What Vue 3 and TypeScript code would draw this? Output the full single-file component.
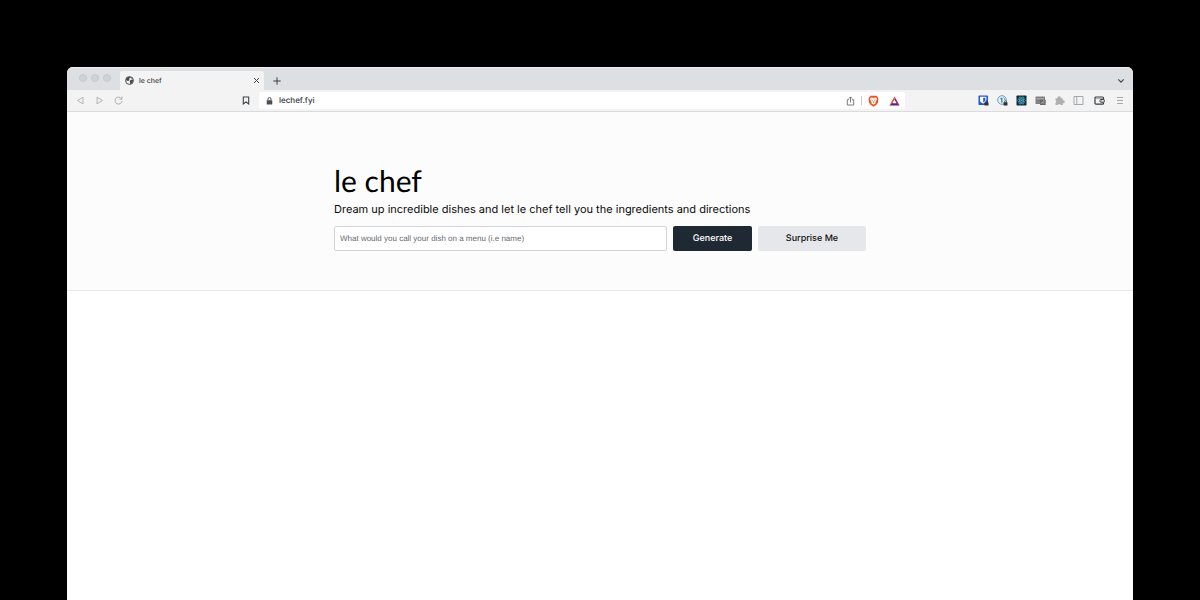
<script setup lang="ts">
import { ref } from 'vue'

const dish = ref('')
const url = ref('lechef.fyi')
</script>

<template>
  <div class="desktop">
    <div class="window">
      <header class="tabs">
        <div class="lights"><span></span><span></span><span></span></div>
        <div class="tab">
          <svg class="globe" viewBox="0 0 16 16" aria-hidden="true">
            <circle cx="8" cy="8" r="7" fill="#f3f4f5" stroke="#42474b" stroke-width="1.7" />
            <path d="M2 5 5 2l5-.5-.5 2L7 5l1 2-2 2-4-1zM9 8l3-2 2.500 1-1 4-4 3.500-1-2 1-2-1.500-1zM11 2l3 3-2 .5z" fill="#42474b" />
          </svg>
          <span class="title">le chef</span>
          <button class="icon" aria-label="Close tab">
            <svg width="7" height="7" viewBox="0 0 7 7"><path d="m1 1 5 5M6 1 1 6" stroke="#44484c" fill="none" /></svg>
          </button>
        </div>
        <button class="icon plus" aria-label="New tab">
          <svg width="8" height="8" viewBox="0 0 8 8"><path d="M4 .3v7.400M.3 4h7.400" stroke="#3c4043" fill="none" /></svg>
        </button>
        <button class="icon chevron" aria-label="Search tabs">
          <svg width="8" height="6" viewBox="0 0 8 6"><path d="m1.300 1.400 2.700 2.700 2.700-2.700" stroke="#3f454a" stroke-width="1.100" fill="none" /></svg>
        </button>
      </header>

      <nav class="toolbar" aria-label="Browser toolbar">
        <div class="left">
          <div class="history">
            <button class="icon" aria-label="Back">
              <svg width="9" height="9" viewBox="0 0 9 9"><path d="M7 1.200v6.600L1.500 4.500z" stroke="#b0b2b4" stroke-linejoin="round" fill="none" /></svg>
            </button>
            <button class="icon" aria-label="Forward">
              <svg width="9" height="9" viewBox="0 0 9 9"><path d="M2 1.200v6.600l5.500-3.300z" stroke="#b0b2b4" stroke-linejoin="round" fill="none" /></svg>
            </button>
            <button class="icon" aria-label="Reload">
              <svg width="9" height="9" viewBox="0 0 9 9"><path d="M7.500 2.700A3.500 3.500 0 1 0 8 5M8 .5v2.700H5.400" stroke="#acaeb0" fill="none" /></svg>
            </button>
          </div>
          <button class="icon" aria-label="Bookmark">
            <svg width="8" height="9" viewBox="0 0 8 9"><path d="M1.300 1h5.400v7L4 5.900 1.300 8z" stroke="#3d4145" stroke-width="1.100" fill="none" /></svg>
          </button>
        </div>

        <div class="address">
          <svg width="7" height="8" viewBox="0 0 7 8" aria-hidden="true">
            <rect x=".7" y="3.200" width="5.600" height="4.300" rx=".6" fill="#4b4f53" />
            <path d="M2 3.400V2a1.500 1.500 0 0 1 3 0v1.400" stroke="#4b4f53" fill="none" />
          </svg>
          <input v-model="url" type="text" aria-label="Address">
          <button class="icon" aria-label="Share">
            <svg width="9" height="10" viewBox="0 0 9 10"><path d="M3 3.700H1.300V9h6.400V3.700H6M4.500 6.500V1M2.800 2.600 4.500.9l1.700 1.700" stroke="#6b6e71" stroke-width=".9" fill="none" /></svg>
          </button>
          <span class="divider"></span>
          <button class="icon" aria-label="Shields">
            <svg width="11" height="12" viewBox="0 0 11 12">
              <path d="M2.500.8h6L10.400 3 10 7.500 8.500 9.700l-3 2-3-2L1 7.500.6 3z" fill="#e75428" />
              <path d="m2.300 3 1.500-.5 1.700.5 1.700-.5 1.500.5.300 1.300-1.500 3 .2 1-2.200 1.500-2.200-1.500.2-1-1.500-3z" fill="#fff4ed" />
              <path d="m3 4.300 1.700.7-.4.900zM8 4.300 6.300 5l.4.900zM5.500 5.500l.5 2-.5.4-.5-.4z" fill="#e75428" />
            </svg>
          </button>
          <button class="icon" aria-label="Rewards">
            <svg width="11" height="10" viewBox="0 0 11 10">
              <path d="M5.500.6.4 9.400 3.600 7l1.900-3z" fill="#ef4a2c" />
              <path d="m5.500.6 5.100 8.800L7.400 7 5.500 4z" fill="#9b2065" />
              <path d="M.4 9.400h10.200L7.800 7H3.300z" fill="#5d2583" />
              <path d="m5.500 4.100 1.900 3.200H3.600z" fill="#fff" />
            </svg>
          </button>
        </div>

        <div class="extensions">
          <button class="icon" aria-label="Password manager">
            <svg width="11" height="11" viewBox="0 0 11 11">
              <rect x=".5" y=".5" width="9.500" height="9.500" rx=".8" fill="#2258d2" />
              <path d="M2 1.800h6.400v3.400c0 1.800-1.600 2.700-3.200 3.400C3.500 7.900 2 7 2 5.200z" fill="#fff" />
              <path d="M5.200 2.800h2.200v2.300c0 1-.9 1.700-2.200 2.400z" fill="#2258d2" />
              <rect x="6.500" y="7.300" width="4" height="3.300" rx=".4" fill="#303337" /><path d="M7.500 7.500v-.8a1 1 0 0 1 2 0v.8" stroke="#303337" stroke-width=".7" fill="none" />
            </svg>
          </button>
          <button class="icon" aria-label="Login extension">
            <svg width="11" height="11" viewBox="0 0 11 11">
              <circle cx="5" cy="5" r="4.300" fill="#e7f1f8" stroke="#6c9dc3" />
              <path d="M3.600 2.800h1.800v5H4.200V4.200h-.8z" fill="#3e789f" /><path d="M6.300 2.500a3 3 0 0 1 1.500 2.800" stroke="#6c9dc3" fill="none" />
              <rect x="6.500" y="7.300" width="4" height="3.300" rx=".4" fill="#303337" /><path d="M7.500 7.500v-.8a1 1 0 0 1 2 0v.8" stroke="#303337" stroke-width=".7" fill="none" />
            </svg>
          </button>
          <button class="icon" aria-label="Component inspector">
            <svg width="11" height="11" viewBox="0 0 11 11">
              <rect x=".5" y=".5" width="10" height="10" rx=".7" fill="#132a38" />
              <g fill="none" stroke="#4fb2ca" stroke-width=".7"><ellipse cx="5.500" cy="5.500" rx="4" ry="1.600" /><ellipse cx="5.500" cy="5.500" rx="4" ry="1.600" transform="rotate(60 5.500 5.500)" /><ellipse cx="5.500" cy="5.500" rx="4" ry="1.600" transform="rotate(120 5.500 5.500)" /></g>
              <circle cx="5.500" cy="5.500" r=".8" fill="#4fb2ca" />
            </svg>
          </button>
          <button class="icon" aria-label="Page capture">
            <svg width="11" height="11" viewBox="0 0 11 11">
              <rect x=".5" y="1.500" width="9.500" height="7.500" rx=".6" fill="#808284" /><path d="M1.500 3.800h7.500" stroke="#c5c6c7" stroke-width=".7" />
              <rect x="5" y="4.700" width="5.700" height="5.300" rx=".5" fill="#656769" /><path d="M6 8.700 7.500 7l2 1.700M8 5.900h1.500" stroke="#cfd0d1" stroke-width=".8" fill="none" />
            </svg>
          </button>
          <button class="icon" aria-label="Extensions">
            <svg width="11" height="11" viewBox="0 0 11 11"><path d="M1.500 3.300h2.300a1.500 1.500 0 1 1 2.800 0h2.200v2.100a1.400 1.400 0 1 1 0 2.600v2H6.600a1.400 1.400 0 0 0-2.700 0H1.500V7.700a1.300 1.300 0 0 0 0-2.400z" fill="#adafb1" /></svg>
          </button>
          <button class="icon" aria-label="Sidebar">
            <svg width="11" height="11" viewBox="0 0 11 11"><path d="M1 1.500h9v8H1zM3.800 1.500v8" stroke="#a6a8aa" fill="none" /></svg>
          </button>
          <button class="icon wallet" aria-label="Wallet">
            <svg width="11" height="11" viewBox="0 0 11 11"><rect x="1" y="2" width="8.500" height="7.200" rx="1" stroke="#393c3f" stroke-width="1.200" fill="none" /><path d="M2 3.500h7" stroke="#777a7d" stroke-width=".6" /><rect x="6" y="4.500" width="4.300" height="2.700" rx=".8" fill="#f4f4f5" stroke="#393c3f" /><circle cx="7.700" cy="5.850" r=".5" fill="#393c3f" /></svg>
          </button>
          <button class="icon" aria-label="Menu">
            <svg width="8" height="9" viewBox="0 0 8 9"><path d="M1 1.500h6M1 4.500h6M1 7.500h6" stroke="#a6a8aa" fill="none" /></svg>
          </button>
        </div>
      </nav>

      <main>
        <section class="hero">
          <div class="content">
            <h1>le chef</h1>
            <p>Dream up incredible dishes and let le chef tell you the ingredients and directions</p>
            <form @submit.prevent>
              <input v-model="dish" type="text" aria-label="Dish name" placeholder="What would you call your dish on a menu (i.e name)">
              <button class="generate" type="submit">Generate</button>
              <button class="surprise" type="button">Surprise Me</button>
            </form>
          </div>
        </section>
      </main>
    </div>
  </div>
</template>

<style>
body { margin: 0; background: #000; }
</style>

<style scoped>
* { box-sizing: border-box; }
.desktop {
  min-height: 100vh;
  display: flex;
  padding: 67px 67px 0;
  background: #000;
  font-family: Inter, "Liberation Sans", sans-serif;
  text-rendering: geometricPrecision;
}
.window {
  flex: 1;
  min-width: 0;
  background: #fff;
  border-radius: 6px 6px 0 0;
  overflow: hidden;
}
button, input { font: inherit; margin: 0; text-rendering: inherit; }
.icon {
  display: flex;
  align-items: center;
  justify-content: center;
  padding: 0;
  border: 0;
  background: none;
  flex: none;
}
svg { display: block; flex: none; }
.tabs {
  height: 23px;
  display: flex;
  align-items: flex-end;
  background: #dce0e3;
  border-top: 1px solid #eceef0;
}
.lights { display: flex; gap: 4px; width: 53px; padding: 0 0 8px 12px; }
.lights span { width: 8px; height: 8px; border-radius: 50%; background: #d0d3d6; border: 1px solid #c6c9cc; }
.tab {
  width: 144px;
  height: 19px;
  display: flex;
  align-items: center;
  gap: 5px;
  padding: 0 4px 0 5px;
  background: #f3f3f4;
  border-radius: 2px 2px 0 0;
}
.globe { width: 9px; height: 9px; }
.title { flex: 1; font-size: 7px; font-weight: 500; color: #3c4043; }
.plus { width: 26px; height: 19px; }
.chevron { width: 24px; height: 19px; margin-left: auto; }
.toolbar {
  height: 22px;
  display: grid;
  grid-template-columns: 192px minmax(0, 1fr) 228px;
  align-items: center;
  background: #f3f3f4;
  border-bottom: 1px solid #d9dbdd;
}
.left { display: flex; justify-content: space-between; padding: 0 9px; }
.history { display: flex; gap: 10px; }
.address {
  height: 17px;
  display: flex;
  align-items: center;
  padding: 0 5px 0 7px;
  gap: 6px;
  background: #fff;
  border-radius: 2px;
}
.address input {
  flex: 1;
  min-width: 0;
  height: 17px;
  padding: 0 0 1px;
  border: 0;
  outline: 0;
  background: none;
  font-size: 8px;
  font-weight: 500;
  color: #303438;
}
.divider { width: 1px; height: 9px; background: #c8cacc; }
.address .icon + .icon { margin-left: 4px; }
.extensions { display: flex; justify-content: flex-end; align-items: center; gap: 8px; padding-right: 9px; }
.wallet { margin: 0 3px 0 2px; }
.hero {
  padding: 51px 24px 39px;
  background: #fcfcfc;
  border-bottom: 1px solid #e9eaec;
}
.content { max-width: 532px; margin: 0 auto; }
h1 {
  margin: 0 0 3px;
  font: 400 30px/36px Lato, sans-serif;
  color: #000;
}
p { margin: 0; font-size: 11px; line-height: 14px; color: #090909; }
form {
  display: grid;
  grid-template-columns: minmax(0, 1fr) 79px 108px;
  gap: 6px;
  margin-top: 10px;
}
form input {
  min-width: 0;
  height: 25px;
  padding: 0 5px;
  border: 1px solid #d2d4d7;
  border-radius: 2px;
  background: #fff;
  font-family: "Liberation Sans", Arial, sans-serif;
  font-size: 8px;
}
form input::placeholder { color: #686b6f; opacity: 1; }
form button {
  height: 25px;
  padding: 0;
  border: 0;
  border-radius: 2px;
  font-size: 9px;
  font-weight: 500;
}
.generate { background: #1e2934; color: #fff; }
.surprise { background: #e6e7eb; color: #111; }
</style>
